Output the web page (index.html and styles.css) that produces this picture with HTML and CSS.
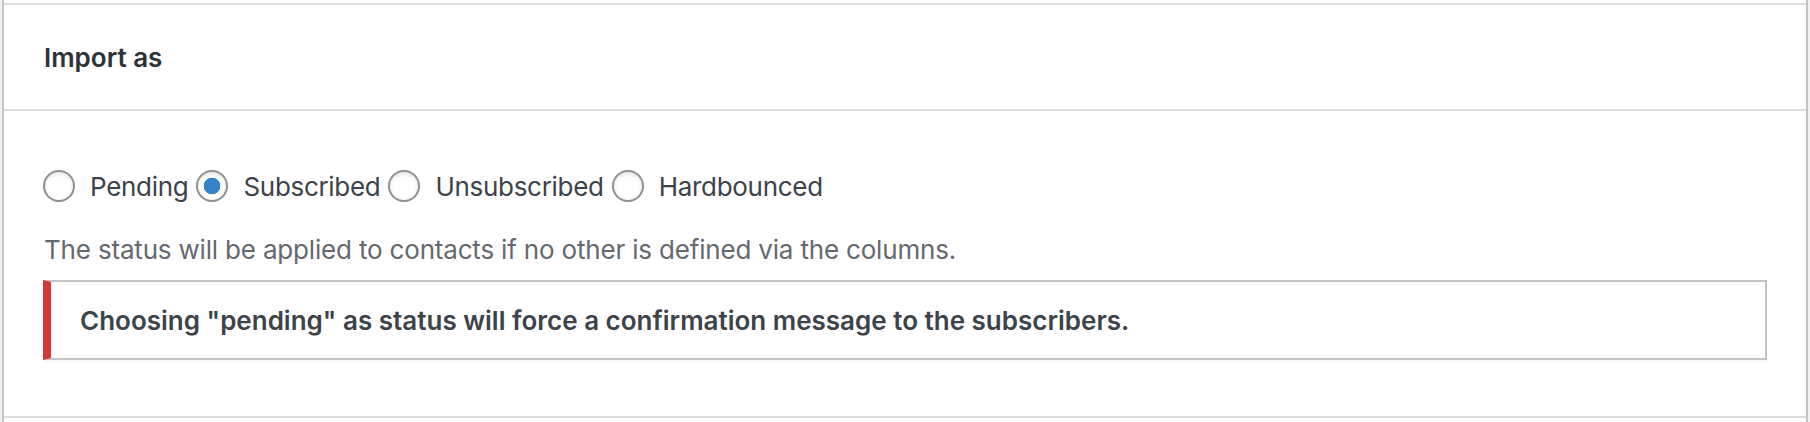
FILE: index.html
```html
<!DOCTYPE html>
<html lang="en">

<head>
    <meta charset="UTF-8">
    <meta name="viewport" content="width=device-width, initial-scale=1.0">
    <title>Import as</title>
    <link rel="stylesheet" href="styles.css">
</head>

<body>
    <div class="postbox">
        <div class="prev-section"></div>
        <div class="hndle">
            <h2>Import as</h2>
        </div>
        <div class="inside">
            <div class="radios">
                <label class="radio-item"><input type="radio" name="status" value="pending">Pending</label>
                <label class="radio-item"><input type="radio" name="status" value="subscribed" checked>Subscribed</label>
                <label class="radio-item"><input type="radio" name="status" value="unsubscribed">Unsubscribed</label>
                <label class="radio-item"><input type="radio" name="status" value="hardbounced">Hardbounced</label>
            </div>
            <p class="description">The status will be applied to contacts if no other is defined via the columns.</p>
            <div class="notice notice-error">
                <p>Choosing "pending" as status will force a confirmation message to the subscribers.</p>
            </div>
        </div>
        <div class="next-section"></div>
    </div>
</body>

</html>
```

FILE: styles.css
```css
body {
    margin: 0;
    background-color: #f0f0f1;
    font-family: Inter, "Liberation Sans", sans-serif;
    color: #3c434a;
}

.postbox {
    margin-left: 2px;
    width: 1806px;
    box-sizing: border-box;
    background-color: white;
    border-left: 2px solid #c3c4c7;
    border-right: 2px solid #c3c4c7;
}

.prev-section {
    height: 3px;
    border-bottom: 2px solid #dcdcde;
}

.hndle {
    height: 104px;
    display: flex;
    align-items: center;
    padding-left: 40px;
    border-bottom: 2px solid #dcdcde;
}

.hndle h2 {
    margin: 0;
    font-size: 26px;
    font-weight: 600;
    color: #2c3338;
}

.inside {
    padding: 59px 40px 56px 40px;
    border-bottom: 2px solid #dcdcde;
}

.radios {
    display: flex;
    align-items: center;
    gap: 8px;
    height: 32px;
    margin-left: -1px;
}

.radio-item {
    display: flex;
    align-items: center;
    gap: 15px;
    font-size: 26px;
    letter-spacing: -0.3px;
    color: #3c434a;
}

.radio-item input {
    appearance: none;
    -webkit-appearance: none;
    margin: 0;
    width: 32px;
    height: 32px;
    border-radius: 50%;
    border: 2px solid #8c8f94;
    background-color: white;
    box-shadow: inset 0 2px 4px rgba(0, 0, 0, .1);
}

.radio-item input:checked {
    background: radial-gradient(circle, #3582c4 0 8px, white 8.6px);
}

.description {
    margin: 28px 0 0 0;
    height: 40px;
    line-height: 40px;
    font-size: 26px;
    letter-spacing: -0.18px;
    color: #646970;
}

.notice {
    margin: 10px -1px 0 -1px;
    height: 80px;
    box-sizing: border-box;
    display: flex;
    align-items: center;
    padding: 0 29px;
    background-color: white;
    border: 2px solid #c3c4c7;
    border-left: 8px solid #d63638;
    box-shadow: 0 2px 2px rgba(0, 0, 0, .04);
}

.notice p {
    margin: 0;
    font-size: 26px;
    font-weight: 600;
    color: #3c434a;
}

.next-section {
    height: 4px;
}
```
